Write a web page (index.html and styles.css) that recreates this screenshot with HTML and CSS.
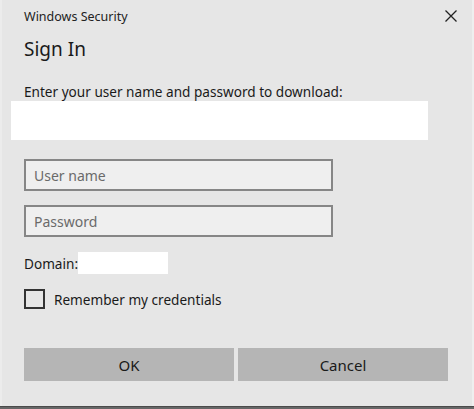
FILE: index.html
```html
<!DOCTYPE html>
<html lang="en">
<head>
    <meta charset="UTF-8">
    <meta name="viewport" content="width=device-width, initial-scale=1.0">
    <title>Windows Security</title>
    <link rel="stylesheet" href="styles.css">
</head>
<body>
    <div class="window">
        <div class="titlebar">
            <span class="title">Windows Security</span>
            <span class="close">
                <svg width="12" height="12" viewBox="0 0 12 12">
                    <path d="M0.5 0.5 L11.5 11.5 M11.5 0.5 L0.5 11.5" stroke="#222" stroke-width="1.3" fill="none"/>
                </svg>
            </span>
        </div>

        <h1>Sign In</h1>
        <p class="prompt">Enter your user name and password to download:</p>
        <div class="hidden-block"></div>

        <input type="text" class="field first" placeholder="User name">
        <input type="password" class="field" placeholder="Password">

        <div class="domain">
            <span>Domain:</span>
            <span class="domain-value"></span>
        </div>

        <label class="remember">
            <span class="box"></span>
            <span>Remember my credentials</span>
        </label>

        <div class="actions">
            <button class="btn">OK</button>
            <button class="btn">Cancel</button>
        </div>
    </div>
    <div class="taskbar"></div>
</body>
</html>
```

FILE: styles.css
```css
body {
    margin: 0;
    padding: 0;
    background-color: #e6e6e6;
    font-family: 'Noto Sans', 'Open Sans', sans-serif;
    color: #1a1a1a;
}
.window {
    height: 406px;
    box-sizing: border-box;
    display: flex;
    flex-direction: column;
    align-items: flex-start;
    border-left: 2px solid #ececec;
    border-right: 2px solid #efefef;
    padding-left: 22px;
}
.titlebar {
    align-self: stretch;
    display: flex;
    justify-content: space-between;
    align-items: center;
    height: 32px;
    padding-right: 15px;
}
.title {
    font-size: 12.5px;
    color: #222;
}
.close {
    display: flex;
}
h1 {
    margin: 5px 0 0;
    font-size: 19px;
    line-height: 24px;
    font-weight: normal;
}
.prompt {
    margin: 21px 0 0;
    font-size: 13.6px;
    line-height: 19px;
}
.hidden-block {
    margin-left: -13px;
    width: 417px;
    height: 39px;
    background: #ffffff;
}
.field {
    width: 309px;
    height: 32px;
    box-sizing: border-box;
    margin: 14px 0 0;
    padding: 0 8px;
    border: 2px solid #868686;
    background: #efefef;
    font-family: inherit;
    font-size: 14px;
    color: #1a1a1a;
    outline: none;
}
.field.first {
    margin-top: 19px;
}
.field::placeholder {
    color: #6a6a6a;
}
.domain {
    margin-top: 15px;
    display: flex;
    align-items: center;
    font-size: 13.6px;
}
.domain-value {
    width: 90px;
    height: 22px;
    background: #ffffff;
}
.remember {
    margin-top: 15px;
    display: flex;
    align-items: center;
    gap: 9px;
    font-size: 13.6px;
}
.box {
    width: 21px;
    height: 20px;
    box-sizing: border-box;
    border: 2px solid #333;
}
.actions {
    margin-top: 39px;
    display: flex;
    gap: 4px;
}
.btn {
    width: 210px;
    height: 33px;
    border: none;
    background: #b5b5b5;
    font-family: inherit;
    font-size: 15px;
    color: #1a1a1a;
    padding: 0;
}
.taskbar {
    height: 3px;
    background: #666;
    border-top: 1px solid #4a4a4a;
    box-sizing: border-box;
}
```
